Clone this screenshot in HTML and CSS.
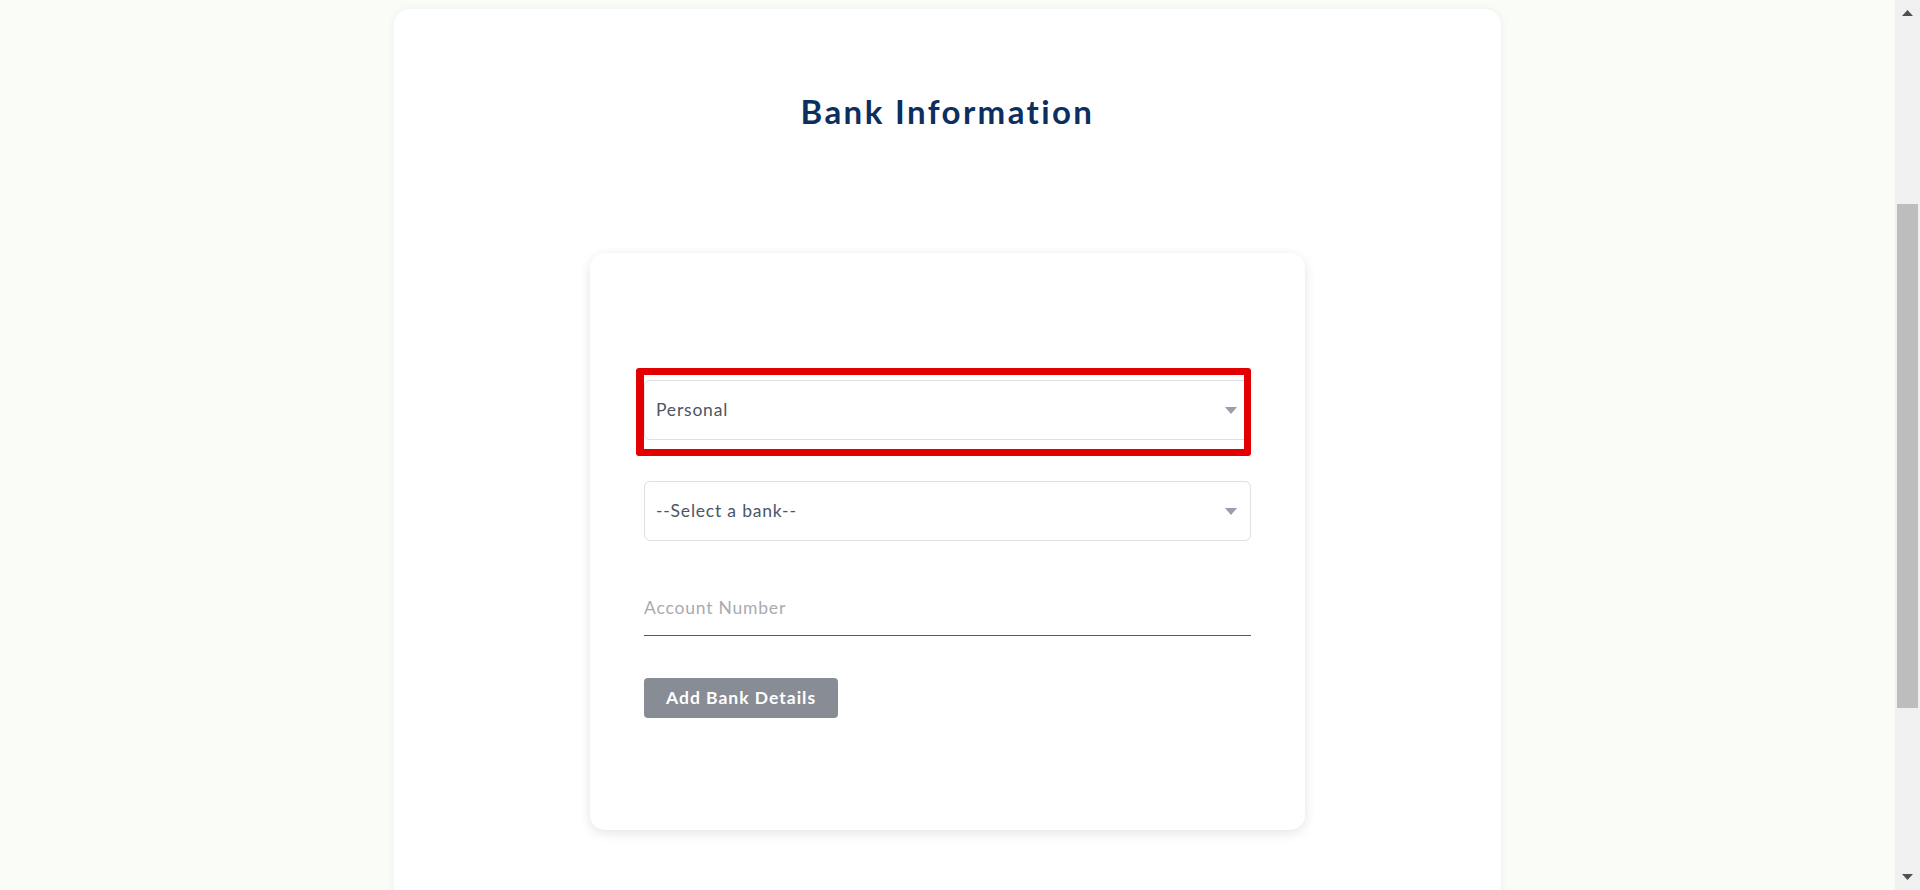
FILE: index.html
```html
<!DOCTYPE html>
<html lang="en">
<head>
<meta charset="utf-8">
<title>Bank Information</title>
<link rel="stylesheet" href="styles.css">
</head>
<body>
<div class="viewport">
  <main class="panel">
    <h1 class="panel-title">Bank Information</h1>
    <section class="bank-card">
      <form class="bank-form">
        <div class="select-wrap">
          <select class="field-select">
            <option>Personal</option>
            <option>Business</option>
          </select>
          <svg class="select-arrow" viewBox="0 0 12 7" aria-hidden="true"><path d="M0 0H12L6 7Z"/></svg>
          <span class="highlight-frame" aria-hidden="true"></span>
        </div>
        <div class="select-wrap">
          <select class="field-select">
            <option>--Select a bank--</option>
          </select>
          <svg class="select-arrow" viewBox="0 0 12 7" aria-hidden="true"><path d="M0 0H12L6 7Z"/></svg>
        </div>
        <input class="field-input" type="text" placeholder="Account Number">
        <div class="form-actions">
          <button class="btn-submit" type="button">Add Bank Details</button>
        </div>
      </form>
    </section>
  </main>
</div>
<div class="scrollbar" aria-hidden="true">
  <div class="sb-btn"><svg class="sb-arrow" viewBox="0 0 11 6"><path d="M5.5 0L11 6H0Z"/></svg></div>
  <div class="sb-track"><div class="sb-thumb"></div></div>
  <div class="sb-btn"><svg class="sb-arrow" viewBox="0 0 11 6"><path d="M0 0H11L5.5 6Z"/></svg></div>
</div>
</body>
</html>
```

FILE: styles.css
```css
html, body {
  margin: 0;
  padding: 0;
}

body {
  display: flex;
  height: 100vh;
  overflow: hidden;
  background: #fafcf7;
  font-family: "Lato", "Open Sans", sans-serif;
  color: #4d5566;
}

.viewport {
  flex: 1;
  min-width: 0;
  height: 100vh;
  overflow: hidden;
  padding-top: 9px;
  box-sizing: border-box;
}

.panel {
  box-sizing: border-box;
  width: 1107px;
  min-height: 1164px;
  margin: 0 auto;
  padding: 82px 0 40px;
  background: #ffffff;
  border-radius: 16px;
  box-shadow: 0 0 8px rgba(0, 0, 0, 0.06);
  display: flex;
  flex-direction: column;
  align-items: center;
}

.panel-title {
  margin: 0;
  font-size: 33px;
  line-height: 40px;
  font-weight: 700;
  color: #0c2f5f;
  letter-spacing: 2.4px;
}

.bank-card {
  box-sizing: border-box;
  width: 715px;
  margin-top: 122px;
  padding: 127px 54px 112px;
  background: #ffffff;
  border-radius: 15px;
  box-shadow: 0 3px 12px rgba(0, 0, 0, 0.11);
}

.bank-form {
  display: flex;
  flex-direction: column;
}

.select-wrap {
  position: relative;
  height: 60px;
}

.select-wrap + .select-wrap {
  margin-top: 41px;
}

.field-select {
  box-sizing: border-box;
  width: 100%;
  height: 60px;
  margin: 0;
  padding: 0 40px 2px 11px;
  border: 1px solid #dedfe2;
  border-radius: 6px;
  background: #ffffff;
  font-family: inherit;
  font-size: 17.5px;
  letter-spacing: 0.8px;
  color: #4d5566;
  appearance: none;
  -webkit-appearance: none;
  outline: none;
}

.select-arrow {
  position: absolute;
  right: 14px;
  top: 27px;
  width: 12px;
  height: 7px;
  fill: #9b9dad;
  pointer-events: none;
}

.highlight-frame {
  position: absolute;
  left: -8px;
  top: -12px;
  right: 0;
  bottom: -16px;
  border: 7px solid #e30000;
  border-left-width: 8px;
  border-radius: 3px;
  pointer-events: none;
}

.field-input {
  box-sizing: border-box;
  width: 100%;
  height: 48px;
  margin: 47px 0 0;
  padding: 0 0 8px;
  border: none;
  border-bottom: 1px solid #4f5a6e;
  background: transparent;
  font-family: inherit;
  font-size: 17.5px;
  letter-spacing: 0.8px;
  color: #4d5566;
  outline: none;
}

.field-input::placeholder {
  color: #a9aab0;
}

.form-actions {
  display: flex;
  margin-top: 42px;
}

.btn-submit {
  box-sizing: border-box;
  height: 40px;
  padding: 0 22px 2px;
  border: none;
  border-radius: 4px;
  background: #878c95;
  color: #ffffff;
  font-family: inherit;
  font-size: 17.5px;
  letter-spacing: 1px;
  font-weight: 700;
  cursor: pointer;
}

.scrollbar {
  flex: 0 0 25px;
  height: 100vh;
  display: flex;
  flex-direction: column;
  background: #f0f0f0;
}

.sb-btn {
  flex: 0 0 26px;
  display: flex;
  align-items: center;
  justify-content: center;
}

.sb-arrow {
  width: 11px;
  height: 6px;
  fill: #505050;
}

.sb-track {
  flex: 1;
  padding: 178px 2px 0;
}

.sb-thumb {
  height: 504px;
  background: #bdbdbd;
}
```
